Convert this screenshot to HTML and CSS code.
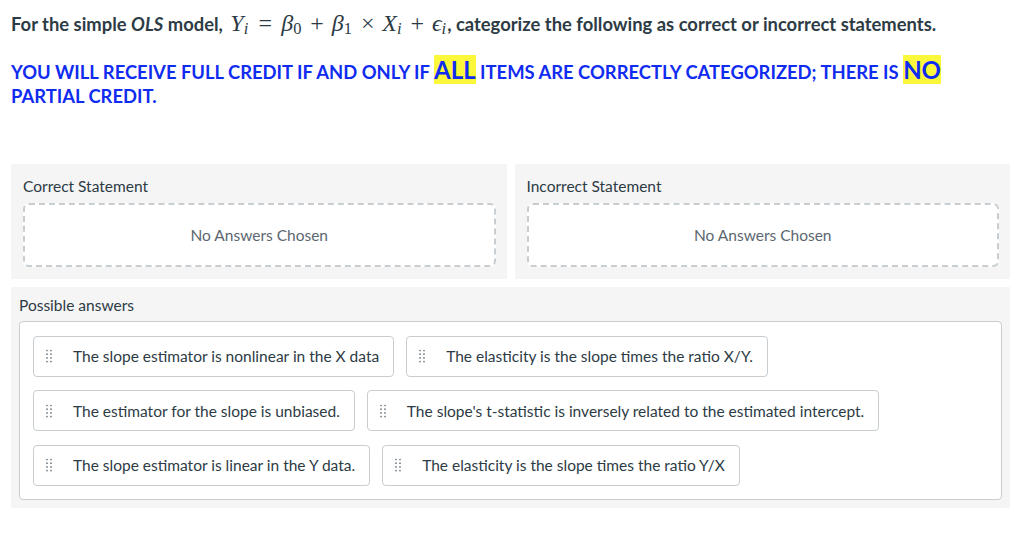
FILE: index.html
```html
<!DOCTYPE html>
<html>
<head>
<meta charset="utf-8">
<link rel="stylesheet" href="styles.css">
</head>
<body>
<div class="page">
  <p class="prompt">For the simple <em>OLS</em> model, <span class="math"><i>Y</i><sub><i>i</i></sub><span class="rel">=</span><i>β</i><sub>0</sub><span class="bin">+</span><i>β</i><sub>1</sub><span class="bin">×</span><i>X</i><sub><i>i</i></sub><span class="bin">+</span><i>ϵ</i><sub><i>i</i></sub></span>, categorize the following as correct or incorrect statements.</p>
  <p class="warning">YOU WILL RECEIVE FULL CREDIT IF AND ONLY IF <span class="hl">ALL</span> ITEMS ARE CORRECTLY CATEGORIZED; THERE IS <span class="hl">NO</span> PARTIAL CREDIT.</p>

  <div class="categories">
    <div class="category">
      <div class="cat-label">Correct Statement</div>
      <div class="drop">No Answers Chosen</div>
    </div>
    <div class="category">
      <div class="cat-label">Incorrect Statement</div>
      <div class="drop">No Answers Chosen</div>
    </div>
  </div>

  <div class="possible">
    <div class="pos-label">Possible answers</div>
    <div class="pool">
      <div class="pool-row">
        <div class="chip"><svg class="handle" width="6" height="14" viewBox="0 0 6 14"><g fill="#6b7780"><circle cx="1" cy="1.5" r="0.85"/><circle cx="5" cy="1.5" r="0.85"/><circle cx="1" cy="5.2" r="0.85"/><circle cx="5" cy="5.2" r="0.85"/><circle cx="1" cy="8.9" r="0.85"/><circle cx="5" cy="8.9" r="0.85"/><circle cx="1" cy="12.6" r="0.85"/><circle cx="5" cy="12.6" r="0.85"/></g></svg><span>The slope estimator is nonlinear in the X data</span></div>
        <div class="chip"><svg class="handle" width="6" height="14" viewBox="0 0 6 14"><g fill="#6b7780"><circle cx="1" cy="1.5" r="0.85"/><circle cx="5" cy="1.5" r="0.85"/><circle cx="1" cy="5.2" r="0.85"/><circle cx="5" cy="5.2" r="0.85"/><circle cx="1" cy="8.9" r="0.85"/><circle cx="5" cy="8.9" r="0.85"/><circle cx="1" cy="12.6" r="0.85"/><circle cx="5" cy="12.6" r="0.85"/></g></svg><span>The elasticity is the slope times the ratio X/Y.</span></div>
      </div>
      <div class="pool-row">
        <div class="chip"><svg class="handle" width="6" height="14" viewBox="0 0 6 14"><g fill="#6b7780"><circle cx="1" cy="1.5" r="0.85"/><circle cx="5" cy="1.5" r="0.85"/><circle cx="1" cy="5.2" r="0.85"/><circle cx="5" cy="5.2" r="0.85"/><circle cx="1" cy="8.9" r="0.85"/><circle cx="5" cy="8.9" r="0.85"/><circle cx="1" cy="12.6" r="0.85"/><circle cx="5" cy="12.6" r="0.85"/></g></svg><span>The estimator for the slope is unbiased.</span></div>
        <div class="chip"><svg class="handle" width="6" height="14" viewBox="0 0 6 14"><g fill="#6b7780"><circle cx="1" cy="1.5" r="0.85"/><circle cx="5" cy="1.5" r="0.85"/><circle cx="1" cy="5.2" r="0.85"/><circle cx="5" cy="5.2" r="0.85"/><circle cx="1" cy="8.9" r="0.85"/><circle cx="5" cy="8.9" r="0.85"/><circle cx="1" cy="12.6" r="0.85"/><circle cx="5" cy="12.6" r="0.85"/></g></svg><span>The slope's t-statistic is inversely related to the estimated intercept.</span></div>
      </div>
      <div class="pool-row">
        <div class="chip"><svg class="handle" width="6" height="14" viewBox="0 0 6 14"><g fill="#6b7780"><circle cx="1" cy="1.5" r="0.85"/><circle cx="5" cy="1.5" r="0.85"/><circle cx="1" cy="5.2" r="0.85"/><circle cx="5" cy="5.2" r="0.85"/><circle cx="1" cy="8.9" r="0.85"/><circle cx="5" cy="8.9" r="0.85"/><circle cx="1" cy="12.6" r="0.85"/><circle cx="5" cy="12.6" r="0.85"/></g></svg><span>The slope estimator is linear in the Y data.</span></div>
        <div class="chip"><svg class="handle" width="6" height="14" viewBox="0 0 6 14"><g fill="#6b7780"><circle cx="1" cy="1.5" r="0.85"/><circle cx="5" cy="1.5" r="0.85"/><circle cx="1" cy="5.2" r="0.85"/><circle cx="5" cy="5.2" r="0.85"/><circle cx="1" cy="8.9" r="0.85"/><circle cx="5" cy="8.9" r="0.85"/><circle cx="1" cy="12.6" r="0.85"/><circle cx="5" cy="12.6" r="0.85"/></g></svg><span>The elasticity is the slope times the ratio Y/X</span></div>
      </div>
    </div>
  </div>
</div>
</body>
</html>
```

FILE: styles.css
```css
html, body {
  margin: 0;
  padding: 0;
  background: #ffffff;
}

body {
  font-family: Lato, "Open Sans", "Liberation Sans", sans-serif;
  color: #2d3b45;
}

.page {
  width: 999px;
  margin-left: 11px;
  padding-top: 11px;
}

.prompt {
  margin: 0;
  font-size: 18.4px;
  font-weight: 700;
  line-height: 1.2;
}

.prompt em {
  font-style: italic;
}

.math {
  font-family: "Liberation Serif", "DejaVu Serif", serif;
  font-weight: 400;
  font-size: 24px;
  line-height: 1;
  white-space: nowrap;
  margin-left: 3px;
}

.math i {
  font-style: italic;
}

.math sub {
  font-size: 16.5px;
  line-height: 0;
  vertical-align: -3px;
  margin: 0 1px 0 0;
}

.math .rel,
.math .bin {
  display: inline-block;
  width: 0.778em;
  text-align: center;
}

.math .rel {
  margin: 0 0.2777em;
}

.math .bin {
  margin: 0 0.2222em;
}

.warning {
  margin: 21px 0 0 0;
  font-size: 18.4px;
  font-weight: 700;
  line-height: 1.2;
  color: #0f2cf0;
}

.hl {
  background: #fbf83c;
  font-size: 24px;
}

.categories {
  display: flex;
  gap: 8px;
  margin-top: 57px;
}

.category {
  flex: 1;
  background: #f5f5f5;
  padding: 12px 11px 12px 12px;
}

.cat-label,
.pos-label {
  font-size: 15.5px;
  line-height: 20px;
}

.cat-label {
  margin-bottom: 7px;
}

.drop {
  height: 60px;
  border: 2px dashed #c7cdd1;
  border-radius: 6px;
  background: #ffffff;
  display: flex;
  align-items: center;
  justify-content: center;
  font-size: 15.5px;
  color: #5b6770;
}

.possible {
  margin-top: 8px;
  background: #f5f5f5;
  padding: 8px;
}

.pos-label {
  margin-bottom: 6px;
}

.pool {
  background: #ffffff;
  border: 1px solid #c7cdd1;
  border-radius: 4px;
  padding: 14px 13px 13px 13px;
  display: flex;
  flex-direction: column;
  gap: 13.5px;
}

.pool-row {
  display: flex;
  gap: 12px;
}

.chip {
  display: flex;
  align-items: center;
  height: 41px;
  box-sizing: border-box;
  border: 1px solid #c7cdd1;
  border-radius: 4px;
  background: #ffffff;
  padding: 0 14px 0 12px;
  font-size: 15.5px;
  color: #2d3b45;
}

.handle {
  display: block;
  margin-right: 21px;
  flex: none;
}
```
